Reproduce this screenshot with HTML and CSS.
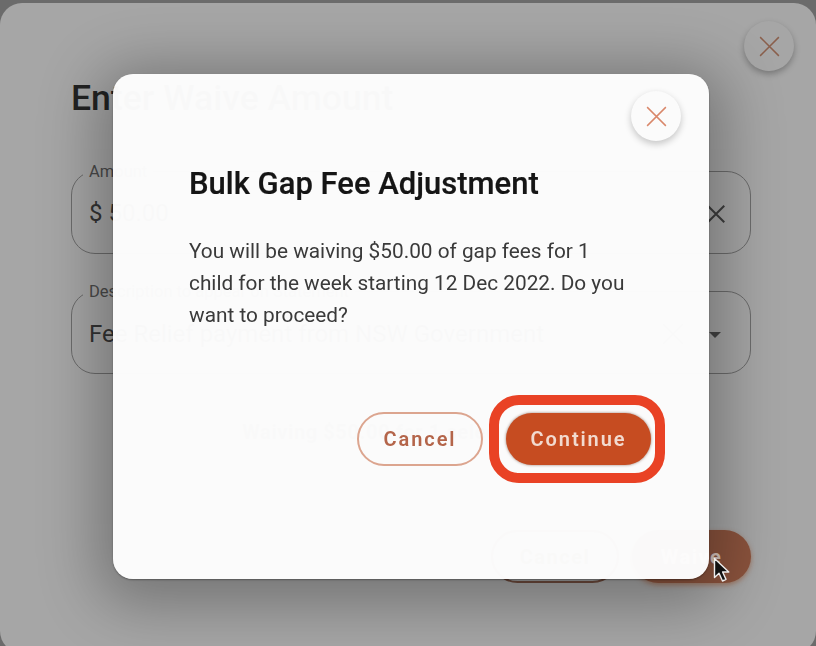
FILE: index.html
```html
<!DOCTYPE html>
<html lang="en">
<head>
<meta charset="utf-8">
<title>Bulk Gap Fee Adjustment</title>
<link rel="stylesheet" href="styles.css">
</head>
<body>
<div class="screen">
  <section class="panel">
    <button class="round-close panel-close" aria-label="Close"><svg viewBox="0 0 24 24" class="x"><path d="M3 3 21 21M21 3 3 21"/></svg></button>
    <h2 class="panel-title">Enter Waive Amount</h2>
    <div class="field">
      <span class="field-label">Amount</span>
      <span class="field-value">$ 50.00</span>
      <svg viewBox="0 0 24 24" class="field-x"><path d="M3 3 21 21M21 3 3 21"/></svg>
    </div>
    <div class="field field-desc">
      <span class="field-label">Description to appear on Statement</span>
      <span class="field-value">Fee Relief payment from NSW Government</span>
      <svg viewBox="0 0 24 24" class="field-x field-x-light"><path d="M3 3 21 21M21 3 3 21"/></svg>
      <span class="caret"></span>
    </div>
    <p class="summary">Waiving $50.00 for 1 selected child</p>
    <div class="panel-actions">
      <span class="btn-under btn-under-cancel">Cancel</span>
      <span class="btn-under btn-under-waive">Waive</span>
    </div>
  </section>

  <section class="modal">
    <button class="round-close modal-close" aria-label="Close"><svg viewBox="0 0 24 24" class="x"><path d="M3 3 21 21M21 3 3 21"/></svg></button>
    <h1 class="modal-title">Bulk Gap Fee Adjustment</h1>
    <p class="modal-text">You will be waiving $50.00 of gap fees for 1 child for the week starting 12 Dec 2022. Do you want to proceed?</p>
    <div class="modal-actions">
      <button class="btn btn-cancel">Cancel</button>
      <div class="highlight"><button class="btn btn-continue">Continue</button></div>
    </div>
  </section>

  <svg class="cursor" viewBox="0 0 18 26"><path d="M1.5 1.5V20.5L6 16.2 9.5 24 13 22.4 9.6 15H15.8Z"/></svg>
</div>
</body>
</html>
```
FILE: styles.css
```css
* { box-sizing: border-box; }
html, body { margin: 0; padding: 0; }
body { width: 816px; height: 646px; overflow: hidden; background: #6b6b6b; font-family: Roboto, "Liberation Sans", sans-serif; }
.screen { position: relative; width: 816px; height: 646px; overflow: hidden; padding-top: 3px; filter: blur(0.5px); }

.panel { position: relative; height: 650px; background: #a6a6a6; border-radius: 22px; padding: 75px 65px 0 71px; }
.panel-title { margin: 0; font-size: 35.6px; line-height: 40px; font-weight: 500; color: #222; }

.field { position: relative; display: flex; align-items: center; height: 83px; margin-top: 53px; padding: 0 16px 0 17px; border: 1px solid #6c6c6c; border-radius: 24px; }
.field-desc { margin-top: 37px; }
.field-label { position: absolute; left: 11px; top: -9px; padding: 0 6px; background: #a6a6a6; font-size: 16.5px; line-height: 18px; color: #4a4a4a; }
.field-value { font-size: 24px; line-height: 30px; color: #333; }
.field-desc .field-value { position: relative; top: 1px; }
.field-x { position: absolute; right: 23px; top: 31px; width: 22px; height: 22px; fill: none; stroke: #3d3d3d; stroke-width: 2.2; }
.field-x-light { right: 64px; top: 29px; width: 26px; height: 26px; stroke-width: 1.5; }
.caret { position: absolute; right: 29px; top: 40px; border-left: 6px solid transparent; border-right: 6px solid transparent; border-top: 6px solid #444; }

.summary { margin: 45px 0 0; text-align: center; font-size: 20px; line-height: 26px; font-weight: 700; letter-spacing: 0.6px; color: #555; }
.panel-actions { display: flex; justify-content: flex-end; gap: 13px; margin-top: 85px; }
.btn-under { display: flex; align-items: center; justify-content: center; height: 53px; border-radius: 27px; font-size: 20px; font-weight: 700; letter-spacing: 1.5px; }
.btn-under-cancel { width: 128px; border: 2px solid #6d4a3c; color: #5c3a2c; }
.btn-under-waive { width: 119px; background: #8b533d; color: #d8c6bd; box-shadow: 0 2px 5px rgba(150,70,30,.5); }

.round-close { display: flex; align-items: center; justify-content: center; width: 50px; height: 50px; padding: 0; border: 0; border-radius: 50%; }
.x { width: 25px; height: 25px; fill: none; stroke-width: 1.4; }
.panel-close { position: absolute; right: 22px; top: 18px; background: #a6a6a6; box-shadow: 0 3px 6px rgba(0,0,0,.28); }
.panel-close .x { stroke: #8a5f4c; }
.modal-close { position: absolute; right: 28px; top: 17px; background: #fbfbfb; box-shadow: 0 3px 7px rgba(0,0,0,.22); }
.modal-close .x { stroke: #d9876a; }

.modal { position: absolute; left: 113px; top: 74px; width: 596px; height: 505px; padding: 92px 44px 0 76px; background: rgba(252,252,252,.985); border-radius: 20px; box-shadow: 0 10px 60px 15px rgba(0,0,0,.3), 0 1px 2px rgba(0,0,0,.35); }
.modal-title { margin: 0; font-size: 31px; line-height: 36px; font-weight: 500; color: #151515; -webkit-text-stroke: 0.2px #151515; }
.modal-text { margin: 33px 34px 0 0; font-size: 20.8px; line-height: 32px; color: #3a3a3a; }
.modal-actions { display: flex; justify-content: flex-end; align-items: center; gap: 6px; margin: 64px 0 0; }

.btn { display: flex; align-items: center; justify-content: center; padding: 0; font-family: inherit; font-size: 20px; font-weight: 600; letter-spacing: 1.9px; border-radius: 27px; }
.btn-cancel { width: 126px; height: 54px; background: transparent; border: 2px solid #dca58f; color: #b4654a; }
.highlight { padding: 8px 4px 8px 7px; border: 10px solid #e94225; border-radius: 30px; background: #fbfbfb; }
.btn-continue { width: 145px; height: 52px; border: 0; background: #c64c21; color: #f2dacf; box-shadow: 0 0 3px rgba(90,40,20,.6); }

.cursor { position: absolute; left: 713px; top: 557px; width: 18px; height: 26px; fill: #111; stroke: #eee; stroke-width: 1.4; stroke-linejoin: round; }
```
